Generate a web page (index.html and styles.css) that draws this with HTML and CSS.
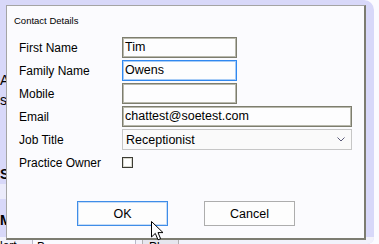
FILE: index.html
```html
<!DOCTYPE html>
<html lang="en">
<head>
    <meta charset="UTF-8">
    <title>Contact Details</title>
    <link rel="stylesheet" href="styles.css">
</head>
<body>
    <div class="frame">
        <div class="behind">
            <div class="frag frag-a">A</div>
            <div class="frag frag-s">s</div>
            <div class="frag frag-st">St</div>
            <div class="frag-bar"></div>
            <div class="frag frag-m">M</div>
            <div class="behind-row">
                <span class="b-label">Alert</span>
                <span class="b-combo">Beep<span class="b-chev">v</span></span>
                <span class="b-btn">Play</span>
            </div>
        </div>

        <div class="dialog">
            <div class="dialog-title">Contact Details</div>

            <div class="form">
                <label>First Name</label>
                <div class="field short">Tim</div>

                <label>Family Name</label>
                <div class="field short focused">Owens</div>

                <label>Mobile</label>
                <div class="field short"></div>

                <label>Email</label>
                <div class="field">chattest@soetest.com</div>

                <label>Job Title</label>
                <div class="select">
                    <span>Receptionist</span>
                    <svg width="8" height="5" viewBox="0 0 8 5"><path d="M0.5 0.5 L4 4 L7.5 0.5" fill="none" stroke="#5a5a78" stroke-width="1"/></svg>
                </div>

                <label>Practice Owner</label>
                <div class="check-cell"><div class="checkbox"></div></div>
            </div>

            <div class="buttons">
                <div class="btn btn-ok">OK</div>
                <div class="btn">Cancel</div>
            </div>
        </div>

        <svg class="cursor" width="14" height="21" viewBox="0 0 14 21">
            <path d="M0.5 0.5 L0.5 16 L4.3 12.4 L7 18.8 L9.6 17.7 L7 11.6 L12 11.6 Z" fill="#fff" stroke="#000" stroke-width="1" stroke-linejoin="miter"/>
        </svg>
    </div>
</body>
</html>
```

FILE: styles.css
```css
body {
    margin: 0;
    background: #fbfbff;
    font-family: "Liberation Sans", Arial, sans-serif;
}

.frame {
    position: relative;
    width: 374px;
    height: 244px;
    background: #d8d8f9;
    border-radius: 0 10px 7px 0;
    overflow: hidden;
}

/* window behind the dialog, only its edges show */
.behind {
    display: flex;
    flex-direction: column;
    color: #000;
}

.frag {
    width: 6px;
    overflow: hidden;
    font-size: 14px;
    line-height: 14px;
    white-space: nowrap;
}

.frag-a {
    margin-top: 73px;
}

.frag-s {
    margin-top: 6px;
}

.frag-st {
    margin-top: 60px;
    font-weight: bold;
}

.frag-bar {
    margin-top: 3px;
    width: 6px;
    height: 15px;
    background: #ebebfb;
}

.frag-m {
    margin-top: 14px;
    font-weight: bold;
}

.behind-row {
    display: flex;
    align-items: flex-start;
    margin-top: 10px;
    font-size: 12px;
    line-height: 14px;
    background: #f2f2fb;
    height: 20px;
}

.b-label {
    margin-left: -8px;
    width: 40px;
    padding-top: 2px;
}

.b-combo {
    display: flex;
    justify-content: space-between;
    width: 92px;
    margin-top: 2px;
    padding: 0 6px 0 4px;
    border: 1px solid #b8b8c8;
    background: #fafaff;
}

.b-chev {
    color: #606070;
    font-size: 10px;
}

.b-btn {
    margin-left: 6px;
    margin-top: 2px;
    padding: 0 6px;
    border: 1px solid #b0b0b0;
    background: #e6e6ee;
}

.dialog {
    position: absolute;
    left: 6px;
    top: 5px;
    width: 360px;
    height: 235px;
    box-sizing: border-box;
    background: #fbfbfe;
    border-top: 1px solid #a4a4a4;
    border-left: 1px solid #a4a4a4;
    border-right: 2px solid #7c7c71;
    border-bottom: 2px solid #7c7c71;
    display: flex;
    flex-direction: column;
}

.dialog-title {
    margin-top: 9px;
    padding-left: 7px;
    font-size: 9.5px;
    line-height: 12px;
    color: #000;
}

.form {
    display: grid;
    grid-template-columns: 103px 230px;
    grid-auto-rows: 21px;
    row-gap: 2px;
    margin-top: 10px;
    padding-left: 12px;
    font-size: 12px;
}

.form label {
    display: flex;
    align-items: center;
    color: #000;
}

.field {
    box-sizing: border-box;
    height: 21px;
    padding: 0 2px;
    border: 1px solid #7d7d6e;
    box-shadow: inset 0 0 0 1px #b9b9ad;
    background: #fdfdfe;
    font-size: 12.5px;
    line-height: 19px;
    color: #000;
    white-space: nowrap;
    overflow: hidden;
}

.field.short {
    width: 115px;
}

.field.focused {
    border-color: #3088f0;
    box-shadow: inset 0 0 0 1px #a8ccf6;
}

.select {
    box-sizing: border-box;
    height: 21px;
    display: flex;
    align-items: center;
    justify-content: space-between;
    padding: 0 6px 0 3px;
    border: 1px solid #c6c6c6;
    background: #fafafa;
    font-size: 12.5px;
    color: #000;
}

.check-cell {
    display: flex;
    align-items: center;
}

.checkbox {
    box-sizing: border-box;
    width: 11px;
    height: 11px;
    border: 1px solid #3c3c34;
    box-shadow: inset 0 0 0 1px #d8d8d0;
    background: #fff;
}

.buttons {
    display: flex;
    justify-content: center;
    gap: 36px;
    margin-top: 28px;
    padding-left: 1px;
}

.btn {
    box-sizing: border-box;
    width: 91px;
    height: 25px;
    display: flex;
    align-items: center;
    justify-content: center;
    border: 1px solid #adadad;
    background: #fdfdfd;
    font-size: 12.5px;
    color: #000;
}

.btn-ok {
    border-color: #3f8de8;
    box-shadow: inset 0 0 0 1px #c6dcf6;
}

.cursor {
    position: absolute;
    left: 151px;
    top: 221px;
}
```
